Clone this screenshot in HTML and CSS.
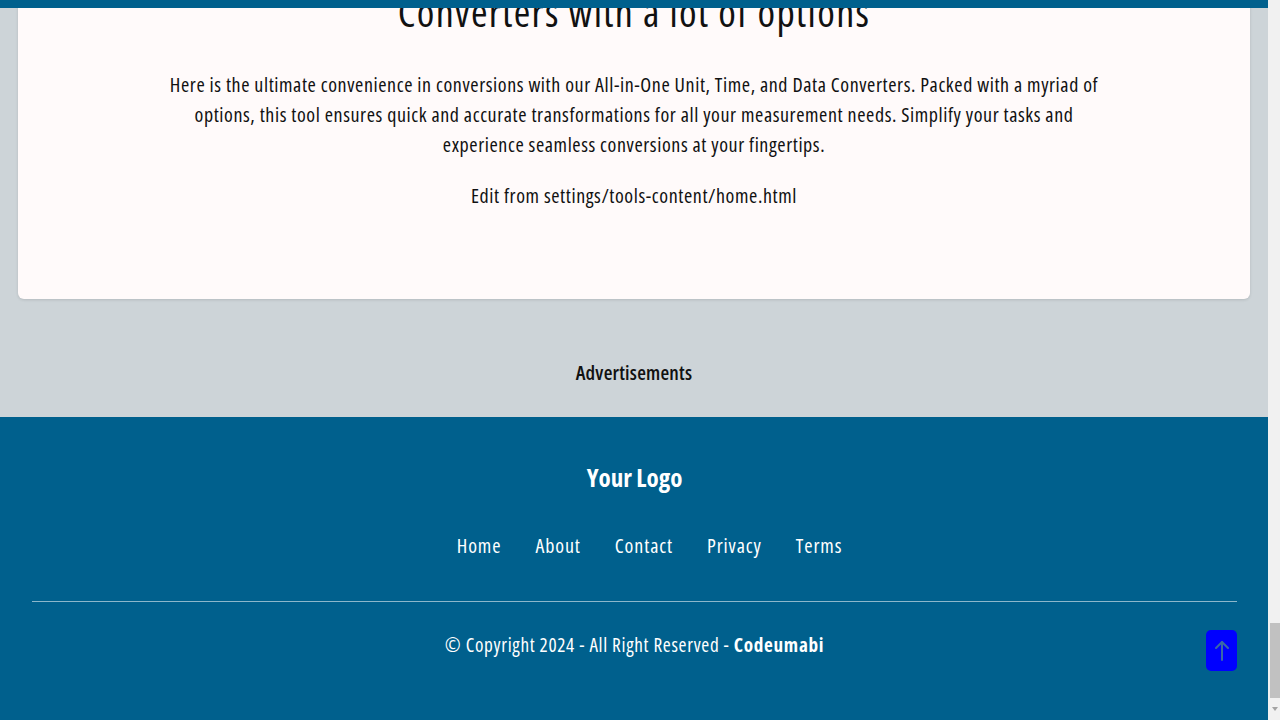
FILE: index.html
```html
<!DOCTYPE html>
<html lang="en">
<head>
    <meta charset="UTF-8">
    <meta name="viewport" content="width=device-width, initial-scale=1.0">
    <title>All-in-One Converters</title>
    <link rel="stylesheet" href="styles.css">
</head>
<body>
    <div class="top-strip"></div>
    <header class="site-header">
        <a class="brand" href="#">Your Logo</a>
        <nav class="header-nav">
            <a href="#">Home</a>
            <a href="#">About</a>
            <a href="#">Contact</a>
        </nav>
    </header>
    <main class="wrap">
        <section class="tools">
            <a class="tool" href="#">Length Converter</a>
            <a class="tool" href="#">Weight Converter</a>
            <a class="tool" href="#">Temperature Converter</a>
            <a class="tool" href="#">Area Converter</a>
            <a class="tool" href="#">Volume Converter</a>
            <a class="tool" href="#">Speed Converter</a>
            <a class="tool" href="#">Time Converter</a>
            <a class="tool" href="#">Data Storage Converter</a>
            <a class="tool" href="#">Pressure Converter</a>
            <a class="tool" href="#">Energy Converter</a>
            <a class="tool" href="#">Power Converter</a>
            <a class="tool" href="#">Angle Converter</a>
            <a class="tool" href="#">Frequency Converter</a>
            <a class="tool" href="#">Fuel Converter</a>
            <a class="tool" href="#">Force Converter</a>
            <a class="tool" href="#">Time Zone Converter</a>
        </section>
        <section class="card">
            <h2>Converters with a lot of options</h2>
            <p>Here is the ultimate convenience in conversions with our All-in-One Unit, Time, and Data Converters. Packed with a myriad of options, this tool ensures quick and accurate transformations for all your measurement needs. Simplify your tasks and experience seamless conversions at your fingertips.</p>
            <p>Edit from settings/tools-content/home.html</p>
        </section>
        <div class="ads">Advertisements</div>
    </main>
    <footer class="site-footer">
        <div class="footer-logo">Your Logo</div>
        <nav class="footer-nav">
            <a href="#">Home</a>
            <a href="#">About</a>
            <a href="#">Contact</a>
            <a href="#">Privacy</a>
            <a href="#">Terms</a>
        </nav>
        <hr>
        <p class="copyright">&copy; Copyright 2024 - All Right Reserved - <b>Codeumabi</b></p>
    </footer>
    <a class="to-top" href="#" aria-label="Back to top">
        <svg width="16" height="22" viewBox="0 0 16 22" fill="none" stroke="#3a68a6" stroke-width="2" stroke-linecap="round" stroke-linejoin="round">
            <path d="M8 20V2"/>
            <path d="M2 8l6-6 6 6"/>
        </svg>
    </a>
    <div class="scroll-rail" aria-hidden="true">
        <div class="scroll-thumb"></div>
        <div class="scroll-arrow"></div>
    </div>
    <script src="main.js"></script>
</body>
</html>
```

FILE: styles.css
```css
* {
    box-sizing: border-box;
}

html {
    background-color: #f1f1f1;
}

body {
    font-family: 'Open Sans', 'Liberation Sans', sans-serif;
    font-stretch: 75%;
    letter-spacing: 0.037em;
    margin: 0 12px 0 0;
    padding: 0;
    background-color: #cdd4d8;
    color: #111;
}

a {
    color: inherit;
    text-decoration: none;
}

.top-strip {
    position: fixed;
    top: 0;
    left: 0;
    right: 12px;
    height: 8px;
    background-color: #00608d;
    z-index: 10;
}

/* page scrollbar, drawn as in the screenshot */
.scroll-rail {
    position: fixed;
    top: 0;
    right: 0;
    bottom: 0;
    width: 12px;
    background-color: #f1f1f1;
}

.scroll-thumb {
    position: absolute;
    left: 2px;
    right: 0;
    bottom: 22px;
    height: 75px;
    background-color: #c1c1c1;
}

.scroll-arrow {
    position: absolute;
    left: 4px;
    bottom: 9px;
    border-left: 3px solid transparent;
    border-right: 3px solid transparent;
    border-top: 4px solid #a3a3a3;
}

.site-header {
    display: flex;
    justify-content: space-between;
    align-items: center;
    padding: 20px 32px;
    background-color: #00608d;
    color: #fff;
}

.brand {
    font-size: 25px;
    font-weight: 700;
}

.header-nav {
    display: flex;
    gap: 34px;
    font-size: 20px;
}

.wrap {
    padding: 24px 18px 0;
}

.tools {
    display: grid;
    grid-template-columns: repeat(4, 1fr);
    gap: 24px;
    margin-bottom: 24px;
}

.tool {
    display: flex;
    align-items: center;
    justify-content: center;
    height: 140px;
    background-color: #fffafa;
    border-radius: 6px;
    font-size: 20px;
}

.card {
    padding: 40px 140px 88px;
    background-color: #fffafa;
    border-radius: 6px;
    box-shadow: 0 1px 3px rgba(0,0,0,0.12);
    text-align: center;
}

.card h2 {
    margin: 0 0 34px;
    font-size: 40px;
    line-height: 48px;
    font-weight: 500;
    letter-spacing: 0.034em;
}

.card p {
    max-width: 950px;
    margin: 0 auto 21px;
    font-size: 20px;
    line-height: 30px;
}

.card p:last-child {
    margin-bottom: 0;
}

.ads {
    padding: 59px 0 29px;
    text-align: center;
    font-size: 20px;
    line-height: 30px;
    font-weight: 600;
    letter-spacing: 0.01em;
}

.site-footer {
    padding: 40px 31px 60px 32px;
    background-color: #00608d;
    color: #fff;
    text-align: center;
}

.footer-logo {
    margin-bottom: 34px;
    font-size: 25px;
    line-height: 40px;
    font-weight: 700;
    letter-spacing: 0;
}

.footer-nav {
    display: flex;
    justify-content: center;
    gap: 34px;
    margin-bottom: 40px;
    padding-left: 30px;
    font-size: 20px;
    line-height: 30px;
    letter-spacing: 0.045em;
}

.site-footer hr {
    margin: 0 0 28px;
    border: 0;
    border-top: 1px solid rgba(255,255,255,0.55);
}

.copyright {
    margin: 0;
    font-size: 19.2px;
    line-height: 30px;
    letter-spacing: 0.036em;
}

.to-top {
    position: fixed;
    right: 43px;
    bottom: 49px;
    display: flex;
    align-items: center;
    justify-content: center;
    width: 31px;
    height: 41px;
    background-color: #0000ff;
    border-radius: 5px;
}
```

FILE: main.js
```js
function toBottom() {
    window.scrollTo(0, document.documentElement.scrollHeight);
}

toBottom();
window.addEventListener('load', toBottom);
```
